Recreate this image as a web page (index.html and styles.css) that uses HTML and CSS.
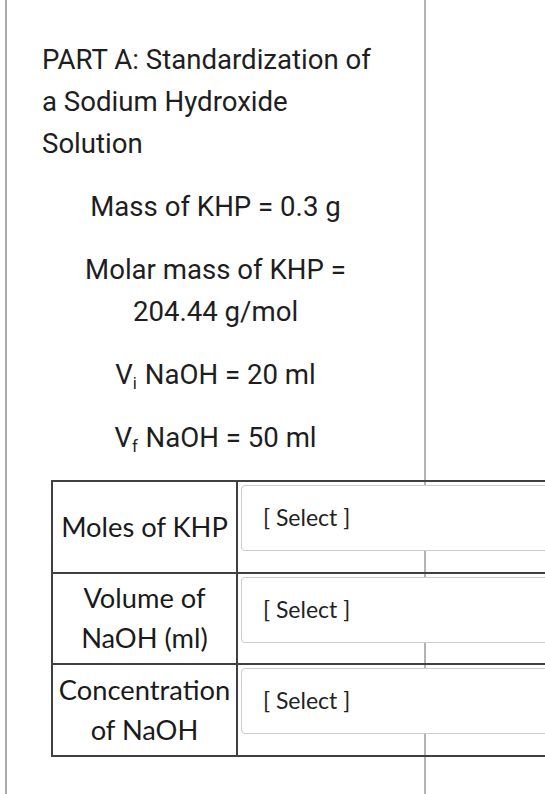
FILE: index.html
```html
<!DOCTYPE html>
<html>
<head>
<meta charset="utf-8">
<link rel="stylesheet" href="styles.css">
</head>
<body>
<div class="page">
  <div class="col">
    <p class="heading">PART A: Standardization of<br>a Sodium Hydroxide<br>Solution</p>
    <p class="center">Mass of KHP = 0.3 g</p>
    <p class="center">Molar mass of KHP =<br>204.44 g/mol</p>
    <p class="center">V<sub>i</sub> NaOH = 20 ml</p>
    <p class="center">V<sub>f</sub> NaOH = 50 ml</p>
    <table class="answers">
      <tr>
        <td class="label">Moles of KHP</td>
        <td class="field"><div class="select">[ Select ]</div></td>
      </tr>
      <tr>
        <td class="label">Volume of<br>NaOH (ml)</td>
        <td class="field"><div class="select">[ Select ]</div></td>
      </tr>
      <tr>
        <td class="label">Concentration<br>of NaOH</td>
        <td class="field"><div class="select">[ Select ]</div></td>
      </tr>
    </table>
  </div>
</div>
</body>
</html>
```

FILE: styles.css
```css
html, body {
  margin: 0;
  padding: 0;
  background: #fff;
  overflow: hidden;
}
.page {
  margin-left: 5px;
  border-left: 2px solid #ababab;
  min-height: 794px;
  width: 540px;
  overflow: hidden;
}
.col {
  min-height: 794px;
  border-right: 2px solid #b3b3b3;
  padding-top: 39px;
  box-sizing: border-box;
  width: 419px;
  font-family: Roboto, "Liberation Sans", sans-serif;
  color: #1e1e1e;
  font-size: 27.6px;
  line-height: 42px;
}
.col p {
  margin: 0 0 21px 0;
}
.heading {
  padding-left: 35px;
}
.center {
  text-align: center;
}
sub {
  font-size: 60%;
  line-height: 0;
  vertical-align: -0.3em;
  margin-right: 1px;
}
.answers {
  margin-left: 44px;
  border-collapse: collapse;
  width: 560px;
  font-family: Lato, "Open Sans", sans-serif;
}
.answers td {
  border: 2px solid #404040;
  padding: 0;
  height: 86.5px;
}
.label {
  width: 183px;
  text-align: center;
  font-size: 27.3px;
  line-height: 40px;
  color: #1a1a1a;
  vertical-align: middle;
}
.field {
  vertical-align: top;
  padding: 3px 0 0 3px !important;
}
.select {
  background: #fff;
  border: 1px solid #c9cdd1;
  border-radius: 4px;
  box-sizing: border-box;
  height: 66px;
  padding-left: 21px;
  display: flex;
  align-items: center;
  font-size: 23px;
  color: #222;
  padding-bottom: 2px;
}
```
